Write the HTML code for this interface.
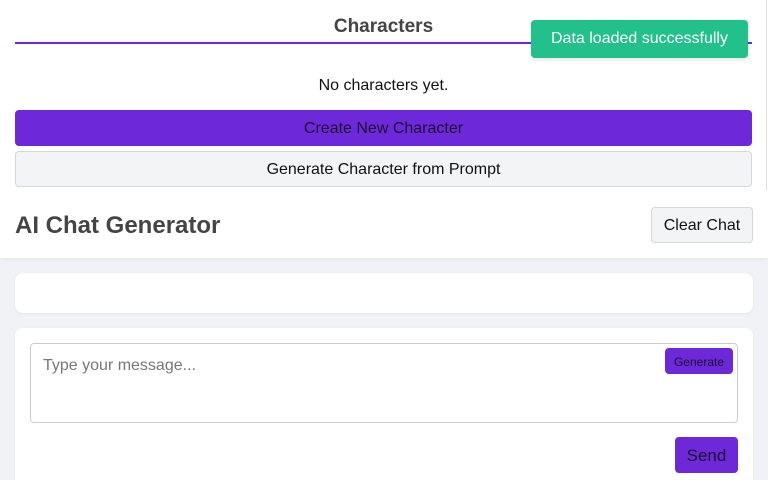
<!DOCTYPE html>
<html><head><style>
*{box-sizing:border-box;margin:0;padding:0}
html,body{width:768px;height:480px;overflow:hidden}
body{background:#f0f2f5;font-family:"Liberation Sans",sans-serif;position:relative}
.a{position:absolute}
.btn{display:flex;align-items:center;justify-content:center;border-radius:4px}
</style></head><body>
<div class="a" style="left:0;top:0;width:768px;height:258px;background:#fff;box-shadow:0 1px 4px rgba(0,0,0,0.06)"></div>
<div class="a" style="left:766px;top:0;width:1px;height:190px;background:#ddd"></div>
<div class="a" style="left:15px;top:16px;width:737px;text-align:center;font-size:19px;font-weight:bold;color:#444">Characters</div>
<div class="a" style="left:15px;top:42px;width:737px;height:2px;background:#6d28d9"></div>
<div class="a btn" style="left:531px;top:20px;width:217px;height:38px;background:#22c08a;color:#fff;font-size:16px;box-shadow:0 2px 4px rgba(0,0,0,0.1)">Data loaded successfully</div>
<div class="a" style="left:15px;top:77px;width:737px;text-align:center;font-size:16px;color:#111">No characters yet.</div>
<div class="a btn" style="left:15px;top:110px;width:737px;height:36px;padding-top:2px;background:#6d28d9;color:#1a1030;font-size:16px">Create New Character</div>
<div class="a btn" style="left:15px;top:151px;width:737px;height:36px;padding-top:2px;background:#f3f4f6;border:1px solid #d5d7db;color:#111;font-size:16px">Generate Character from Prompt</div>
<div class="a" style="left:15px;top:212px;font-size:24px;font-weight:bold;color:#444">AI Chat Generator</div>
<div class="a btn" style="left:651px;top:207px;width:102px;height:36px;padding-top:2px;background:#f3f4f6;border:1px solid #d5d7db;color:#111;font-size:16px">Clear Chat</div>
<div class="a" style="left:15px;top:273px;width:738px;height:40px;background:#fff;border-radius:8px;box-shadow:0 1px 3px rgba(0,0,0,0.05)"></div>
<div class="a" style="left:15px;top:328px;width:738px;height:152px;background:#fff;border-radius:8px 8px 0 0;box-shadow:0 1px 3px rgba(0,0,0,0.05)"></div>
<div class="a" style="left:30px;top:343px;width:708px;height:80px;border:1px solid #ccc;border-radius:4px"></div>
<div class="a" style="left:43px;top:357px;font-size:16px;color:#777">Type your message...</div>
<div class="a btn" style="left:665px;top:348px;width:68px;height:26px;padding-top:1px;background:#6d28d9;color:#1a1030;font-size:12px">Generate</div>
<div class="a btn" style="left:675px;top:437px;width:63px;height:36px;padding-top:1px;background:#6d28d9;color:#1a1030;font-size:17px">Send</div>
</body></html>
